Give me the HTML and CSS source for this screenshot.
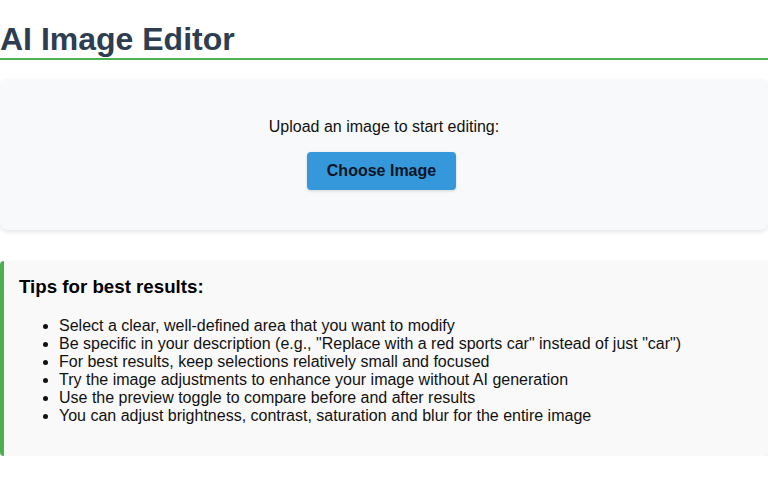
FILE: index.html
```html
<!DOCTYPE html>
<html>
<head>
<meta charset="utf-8">
<link rel="stylesheet" href="styles.css">
</head>
<body>
<h1 class="title">AI Image Editor</h1>
<div class="upload-card">
  <p class="upload-text">Upload an image to start editing:</p>
  <button class="choose-btn">Choose Image</button>
</div>
<div class="tips-card">
  <h3 class="tips-title">Tips for best results:</h3>
  <ul class="tips-list">
    <li>Select a clear, well-defined area that you want to modify</li>
    <li>Be specific in your description (e.g., "Replace with a red sports car" instead of just "car")</li>
    <li>For best results, keep selections relatively small and focused</li>
    <li>Try the image adjustments to enhance your image without AI generation</li>
    <li>Use the preview toggle to compare before and after results</li>
    <li>You can adjust brightness, contrast, saturation and blur for the entire image</li>
  </ul>
</div>
</body>
</html>
```
FILE: styles.css
```css
html, body {
  margin: 0;
  padding: 0;
  background: #fff;
}
body {
  font-family: "Liberation Sans", Arial, sans-serif;
  color: #222;
}
.title {
  font-size: 32px;
  font-weight: bold;
  color: #2c3e50;
  margin: 21px 0 19px;
  line-height: 37px;
  border-bottom: 2px solid #4caf50;
}
.upload-card {
  background: #f8f9fa;
  border-radius: 8px;
  box-shadow: 0 2px 5px rgba(0, 0, 0, 0.1);
  padding: 23px 20px 40px;
  text-align: center;
  margin-bottom: 31px;
}
.upload-text {
  margin: 16px 0;
  font-size: 16px;
  line-height: 18px;
  color: #111;
}
.choose-btn {
  font-family: "Liberation Sans", Arial, sans-serif;
  font-size: 16px;
  font-weight: bold;
  line-height: 18px;
  padding: 10px 20px;
  margin-right: 5px;
  background: #3498db;
  color: #0b1526;
  border: none;
  border-radius: 4px;
  box-shadow: 0 1px 3px rgba(0, 0, 0, 0.15);
}
.tips-card {
  background: #f9f9f9;
  border-left: 4px solid #4caf50;
  border-radius: 4px;
  box-shadow: 0 2px 5px rgba(0, 0, 0, 0.1);
  padding: 15px;
}
.tips-title {
  margin: 0 0 19px;
  font-size: 18.72px;
  line-height: 22px;
  color: #000;
}
.tips-list {
  margin: 0 0 16px;
  padding-left: 40px;
  font-size: 16px;
  line-height: 18px;
  color: #111;
}
```
